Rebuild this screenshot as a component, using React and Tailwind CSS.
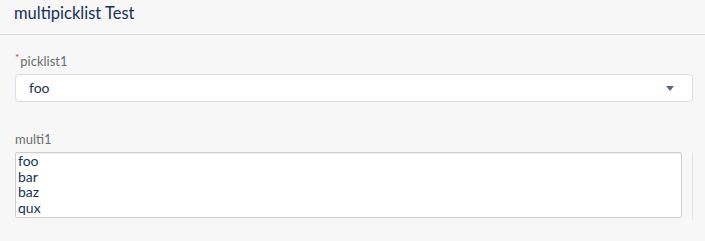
import React from "react";

const font = { fontFamily: "Lato, 'Noto Sans', sans-serif" };

export default function App() {
  const options = ["foo", "bar", "baz", "qux"];

  return (
    <div className="w-[705px] h-[241px] bg-[#f7f7f7] overflow-hidden" style={font}>
      {/* Header */}
      <div className="h-[35px] border-b border-[#d8d8d8] pl-[14px] pt-[3px]">
        <h1 className="text-[16.5px] leading-[20px] text-[#16325c]">multipicklist Test</h1>
      </div>

      {/* Form */}
      <div className="pl-[15px] pr-[12px]">
        <div className="mt-[18px] text-[13px] leading-[16px] text-[#6b6b6b] flex">
          <span className="text-[#c23934] text-[10px] leading-[10px] mr-[1px] -mt-[1px]">*</span>
          <span>picklist1</span>
        </div>
        <div className="mt-[5px] h-[28px] bg-white border border-[#d8dde6] rounded-[4px] flex items-center justify-between pl-[13px] pr-[18px]">
          <span className="text-[14px] leading-[16px] text-[#16325c]">foo</span>
          <svg width="8" height="5" viewBox="0 0 8 5">
            <path d="M0 0 H8 L4 5 Z" fill="#54698d" />
          </svg>
        </div>

        <div className="mt-[29px] text-[13px] leading-[16px] text-[#6b6b6b]">multi1</div>
        <div className="mt-[5px] flex items-stretch">
          <div className="w-[667px] h-[66px] bg-white border border-[#cfcfcf] rounded-[2px] shadow-[inset_0_1px_1px_rgba(0,0,0,0.06)] pl-[2px] overflow-hidden">
            {options.map((o) => (
              <div key={o} className="text-[14px] leading-[15.5px] text-[#16325c]">
                {o}
              </div>
            ))}
          </div>
          <div className="ml-[10px] mt-[1px] h-[67px] w-px bg-[#e4e4e4]" />
        </div>
      </div>
    </div>
  );
}
